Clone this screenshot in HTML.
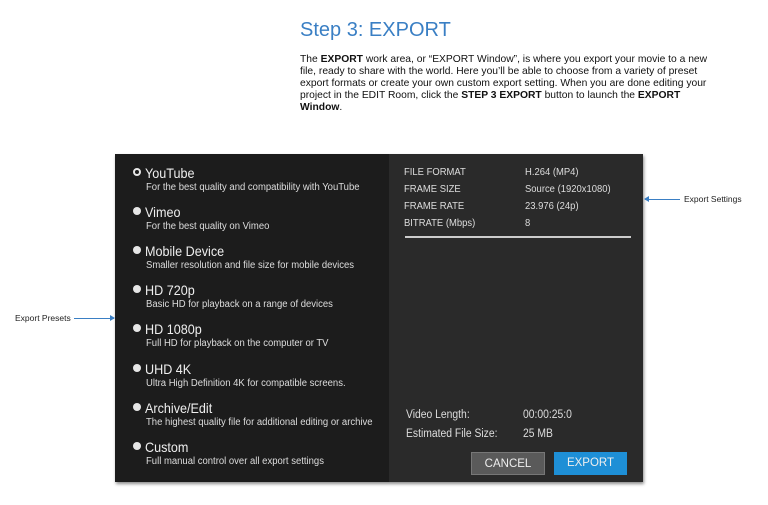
<!DOCTYPE html>
<html><head><style>
*{margin:0;padding:0;box-sizing:border-box}
body{width:768px;height:505px;background:#fff;position:relative;overflow:hidden;font-family:"Liberation Sans",sans-serif}
.a{position:absolute}
h1{position:absolute;left:300px;top:19px;font-weight:normal;font-size:20px;color:#3a7fc4}
.p{left:300px;top:54px;width:422px;font-size:10.3px;line-height:12px;color:#111}
.panel{left:115px;top:154px;width:528px;height:328px;background:#2a2a2a;box-shadow:1px 2px 3px rgba(0,0,0,.45)}
.left{left:115px;top:154px;width:274px;height:328px;background:#1c1c1c}
.n{color:#eee;white-space:nowrap;transform-origin:left top}
.t{font-size:14px;left:145px;transform:scaleX(.9)}
.s{font-size:10px;left:146px;color:#ddd;transform:scaleX(.95)}
.r{left:133px;width:8px;height:8px;border-radius:50%;background:#e6e6e6}
.k{font-size:10.5px;color:#ddd;transform:scaleX(.9)}
.btn{top:452px;height:23px;font-size:11.5px;text-align:center;line-height:23px;color:#eee}
</style></head><body>
<h1>Step 3: EXPORT</h1>
<div class="a p">The <b>EXPORT</b> work area, or “EXPORT Window”, is where you export your movie to a new file, ready to share with the world. Here you’ll be able to choose from a variety of preset export formats or create your own custom export setting. When you are done editing your project in the EDIT Room, click the <b>STEP 3 EXPORT</b> button to launch the <b>EXPORT Window</b>.</div>
<div class="a panel"></div>
<div class="a left"></div>

<div class="a r" style="top:168px;background:#1c1c1c;border:2.5px solid #e6e6e6"></div>
<div class="a n t" style="top:165px">YouTube</div><div class="a n s" style="top:182px">For the best quality and compatibility with YouTube</div>
<div class="a r" style="top:207px"></div>
<div class="a n t" style="top:204px">Vimeo</div><div class="a n s" style="top:221px">For the best quality on Vimeo</div>
<div class="a r" style="top:246px"></div>
<div class="a n t" style="top:243px">Mobile Device</div><div class="a n s" style="top:260px">Smaller resolution and file size for mobile devices</div>
<div class="a r" style="top:285px"></div>
<div class="a n t" style="top:282px">HD 720p</div><div class="a n s" style="top:299px">Basic HD for playback on a range of devices</div>
<div class="a r" style="top:324px"></div>
<div class="a n t" style="top:321px">HD 1080p</div><div class="a n s" style="top:338px">Full HD for playback on the computer or TV</div>
<div class="a r" style="top:364px"></div>
<div class="a n t" style="top:361px">UHD 4K</div><div class="a n s" style="top:378px">Ultra High Definition 4K for compatible screens.</div>
<div class="a r" style="top:403px"></div>
<div class="a n t" style="top:400px">Archive/Edit</div><div class="a n s" style="top:417px">The highest quality file for additional editing or archive</div>
<div class="a r" style="top:442px"></div>
<div class="a n t" style="top:439px">Custom</div><div class="a n s" style="top:456px">Full manual control over all export settings</div>

<div class="a n k" style="left:404px;top:166px">FILE FORMAT</div><div class="a n k" style="left:525px;top:166px">H.264 (MP4)</div>
<div class="a n k" style="left:404px;top:183px">FRAME SIZE</div><div class="a n k" style="left:525px;top:183px">Source (1920x1080)</div>
<div class="a n k" style="left:404px;top:200px">FRAME RATE</div><div class="a n k" style="left:525px;top:200px">23.976 (24p)</div>
<div class="a n k" style="left:404px;top:217px">BITRATE (Mbps)</div><div class="a n k" style="left:525px;top:217px">8</div>
<div class="a" style="left:405px;top:236px;width:226px;height:2px;background:#ccc"></div>

<div class="a n k" style="left:406px;top:409px;font-size:11.5px">Video Length:</div><div class="a n k" style="left:523px;top:409px;font-size:11.5px">00:00:25:0</div>
<div class="a n k" style="left:406px;top:428px;font-size:11.5px">Estimated File Size:</div><div class="a n k" style="left:523px;top:428px;font-size:11.5px">25 MB</div>
<div class="a btn" style="left:471px;width:74px;background:#5a5a5a;border:1px solid #777">CANCEL</div>
<div class="a btn" style="left:554px;width:73px;background:#1e8fd6">EXPORT</div>

<div class="a" style="left:15px;top:313px;font-size:8.5px;color:#222">Export Presets</div>
<div class="a" style="left:74px;top:318px;width:40px;height:1px;background:#3a7fc4"></div>
<div class="a" style="left:110px;top:315px;border-left:5px solid #3a7fc4;border-top:3.5px solid transparent;border-bottom:3.5px solid transparent"></div>
<div class="a" style="left:684px;top:194px;font-size:8.5px;color:#222">Export Settings</div>
<div class="a" style="left:645px;top:199px;width:35px;height:1px;background:#3a7fc4"></div>
<div class="a" style="left:644px;top:196px;border-right:5px solid #3a7fc4;border-top:3.5px solid transparent;border-bottom:3.5px solid transparent"></div>
</body></html>
